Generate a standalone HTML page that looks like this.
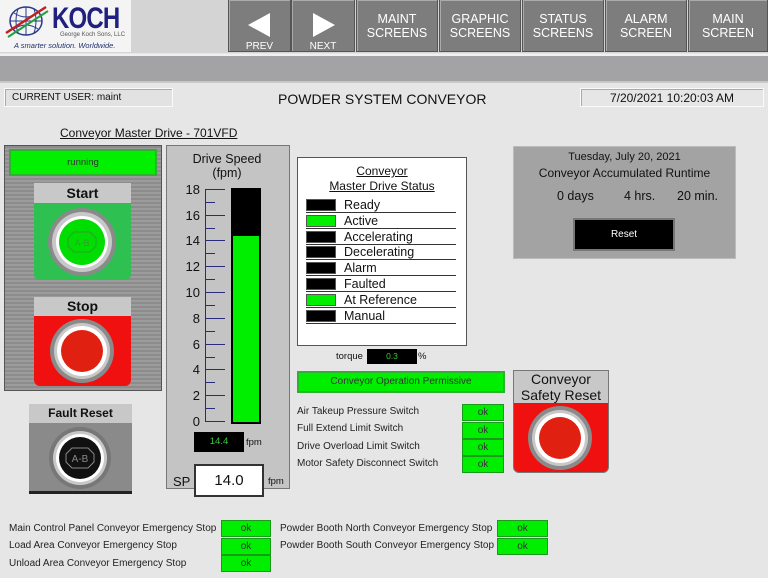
<!DOCTYPE html>
<html><head><style>
*{margin:0;padding:0;box-sizing:border-box}
body{width:768px;height:578px;background:#e6e6e6;font-family:"Liberation Sans",Arial,sans-serif;position:relative;overflow:hidden;color:#111}
.a{position:absolute}
.nav{position:absolute;top:0;height:52px;background:#7d7d7d;border:1px solid #555;border-top:none;color:#fff;font-size:12.5px;text-align:center;line-height:14px;padding-top:12px;box-shadow:inset 1px 1px 0 #aaa}
.ok{position:absolute;background:#00ee00;border:1px solid #1a9a1a;font-size:10px;color:#333;text-align:center;line-height:15px;height:17px}
.lbl{position:absolute;font-size:10px;color:#222;white-space:nowrap}
.row{position:absolute;left:306px;width:150px;height:15px;border-bottom:1px solid #333;font-size:12.5px}
.row i{position:absolute;left:0;top:1px;width:30px;height:12px;background:#000;border:1px solid #555}
.row span{position:absolute;left:38px;top:0}
.tk{position:absolute;left:205px;height:1px;background:#2a2a7a}
.num{position:absolute;left:180px;width:20px;text-align:right;font-size:13px}
</style></head><body>
<div class="a" style="left:0;top:0;width:768px;height:53px;background:#d4d4d4"></div>
<div class="a" style="left:0;top:0;width:131px;height:52px;background:#f4f4f4"></div>
<svg class="a" style="left:4px;top:3px" width="46" height="36"><ellipse cx="22" cy="18" rx="16" ry="14" fill="none" stroke="#2a3a8a" stroke-width="1.5"/><path d="M6 18h32M22 4v28M10 10q12 8 24 0M10 26q12-8 24 0M14 6q-4 12 0 24M30 6q4 12 0 24" fill="none" stroke="#2a3a8a"/><path d="M2 30L42 4" stroke="#c02020" stroke-width="2.5"/><path d="M4 34L44 8" stroke="#20a040" stroke-width="2"/></svg>
<div class="a" style="left:52px;top:2px;font-size:30px;font-weight:bold;color:#202080;letter-spacing:-1px;transform:scaleX(0.8);transform-origin:left">KOCH</div>
<div class="a" style="left:60px;top:32px;font-size:6px;color:#555">George Koch Sons, LLC</div>
<div class="a" style="left:14px;top:41px;font-size:7.5px;color:#203070;font-style:italic">A smarter solution. Worldwide.</div>
<div class="nav" style="left:228px;width:63px;padding-top:40px;font-size:10px">PREV</div>
<svg class="a" style="left:246px;top:12px" width="26" height="26"><path d="M24 1L2 13L24 25Z" fill="#fff"/></svg>
<div class="nav" style="left:291px;width:64px;padding-top:40px;font-size:10px">NEXT</div>
<svg class="a" style="left:311px;top:12px" width="26" height="26"><path d="M2 1L24 13L2 25Z" fill="#fff"/></svg>
<div class="nav" style="left:356px;width:82px">MAINT<br>SCREENS</div>
<div class="nav" style="left:439px;width:82px">GRAPHIC<br>SCREENS</div>
<div class="nav" style="left:522px;width:82px">STATUS<br>SCREENS</div>
<div class="nav" style="left:605px;width:82px">ALARM<br>SCREEN</div>
<div class="nav" style="left:688px;width:80px">MAIN<br>SCREEN</div>
<div class="a" style="left:0;top:54px;width:768px;height:29px;background:#a3a3a6;border-top:2px solid #f0f0f0;border-bottom:2px solid #c8c8c8"></div>
<div class="a" style="left:4px;top:88px;width:169px;height:19px;background:#e2e2e2;border:1px solid #fafafa;box-shadow:inset 1px 1px 0 #aaa;font-size:10px;line-height:18px;padding-left:7px">CURRENT USER: maint</div>
<div class="a" style="left:278px;top:91px;font-size:14px">POWDER SYSTEM CONVEYOR</div>
<div class="a" style="left:580px;top:88px;width:184px;height:19px;border:1px solid #fafafa;box-shadow:inset 1px 1px 0 #aaa;font-size:12px;line-height:18px;text-align:center">7/20/2021 10:20:03 AM</div>
<div class="a" style="left:60px;top:126px;font-size:12px;text-decoration:underline">Conveyor Master Drive - 701VFD</div>

<div class="a" style="left:4px;top:145px;width:158px;height:246px;border:1px solid #555;background:repeating-linear-gradient(#8c8c8c 0 2px,#9c9c9c 2px 4px)"></div>
<div class="a" style="left:9px;top:149px;width:148px;height:27px;background:#00f000;border:2px solid #30b030;font-size:9.5px;text-align:center;line-height:23px;color:#333">running</div>
<div class="a" style="left:34px;top:183px;width:97px;height:20px;background:#c8c8c8;font-size:14px;font-weight:bold;text-align:center;line-height:20px">Start</div>
<div class="a" style="left:34px;top:203px;width:97px;height:77px;background:#2ec050;border-radius:0 0 6px 6px"></div>
<svg class="a" style="left:47px;top:207px" width="70" height="70"><circle cx="35" cy="35" r="34" fill="#8a8a8a"/><circle cx="35" cy="35" r="30" fill="#c8c8c8"/><circle cx="35" cy="35" r="26" fill="#fff"/><circle cx="35" cy="35" r="23" fill="#00dd00"/><path d="M27 25h16l6 6v8l-6 6h-16l-6-6v-8z" fill="none" stroke="#30a030"/><text x="35" y="39" font-size="9" text-anchor="middle" fill="#30a030" font-family="Liberation Sans">A-B</text></svg>
<div class="a" style="left:34px;top:297px;width:97px;height:19px;background:#c8c8c8;font-size:14px;font-weight:bold;text-align:center;line-height:19px">Stop</div>
<div class="a" style="left:34px;top:316px;width:97px;height:70px;background:#f01010;border-radius:0 0 6px 6px"></div>
<svg class="a" style="left:49px;top:318px" width="66" height="66"><circle cx="33" cy="33" r="32" fill="#8a8a8a"/><circle cx="33" cy="33" r="28" fill="#c8c8c8"/><circle cx="33" cy="33" r="25" fill="#fff"/><circle cx="33" cy="33" r="21" fill="#e02010"/></svg>

<div class="a" style="left:29px;top:404px;width:103px;height:90px;background:#8a8a8a;border-bottom:3px solid #222"></div>
<div class="a" style="left:29px;top:404px;width:103px;height:19px;background:#c8c8c8;font-size:12px;font-weight:bold;text-align:center;line-height:19px">Fault Reset</div>
<svg class="a" style="left:45px;top:426px" width="70" height="64"><circle cx="35" cy="32" r="31" fill="#777"/><circle cx="35" cy="32" r="27" fill="#c8c8c8"/><circle cx="35" cy="32" r="24" fill="#fff"/><circle cx="35" cy="32" r="21" fill="#111"/><path d="M27 22h16l6 6v8l-6 6h-16l-6-6v-8z" fill="none" stroke="#888"/><text x="35" y="36" font-size="10" text-anchor="middle" fill="#888" font-family="Liberation Sans">A-B</text></svg>

<div class="a" style="left:166px;top:145px;width:124px;height:344px;background:#c4c4c4;border:1px solid #777"></div>
<div class="a" style="left:166px;top:152px;width:122px;text-align:center;font-size:12.5px;line-height:14px">Drive Speed<br>(fpm)</div>
<div class="a" style="left:205px;top:189px;width:1px;height:232px;background:#2a2a7a"></div>
<div class="tk" style="top:189px;width:20px"></div><div class="tk" style="top:202px;width:10px"></div>
<div class="tk" style="top:215px;width:20px"></div><div class="tk" style="top:228px;width:10px"></div>
<div class="tk" style="top:240px;width:20px"></div><div class="tk" style="top:253px;width:10px"></div>
<div class="tk" style="top:266px;width:20px"></div><div class="tk" style="top:279px;width:10px"></div>
<div class="tk" style="top:292px;width:20px"></div><div class="tk" style="top:305px;width:10px"></div>
<div class="tk" style="top:318px;width:20px"></div><div class="tk" style="top:331px;width:10px"></div>
<div class="tk" style="top:344px;width:20px"></div><div class="tk" style="top:357px;width:10px"></div>
<div class="tk" style="top:369px;width:20px"></div><div class="tk" style="top:382px;width:10px"></div>
<div class="tk" style="top:395px;width:20px"></div><div class="tk" style="top:408px;width:10px"></div>
<div class="tk" style="top:421px;width:20px"></div>
<div class="num" style="top:182px">18</div><div class="num" style="top:208px">16</div><div class="num" style="top:233px">14</div><div class="num" style="top:259px">12</div><div class="num" style="top:285px">10</div><div class="num" style="top:311px">8</div><div class="num" style="top:337px">6</div><div class="num" style="top:362px">4</div><div class="num" style="top:388px">2</div><div class="num" style="top:414px">0</div>
<div class="a" style="left:231px;top:188px;width:30px;height:236px;background:#000"></div>
<div class="a" style="left:233px;top:236px;width:26px;height:186px;background:#00ee00"></div>
<div class="a" style="left:194px;top:432px;width:50px;height:20px;background:#000;color:#3c3;font-size:9.5px;text-align:center;line-height:20px">14.4</div>
<div class="a" style="left:246px;top:437px;font-size:9.5px">fpm</div>
<div class="a" style="left:173px;top:474px;font-size:13px">SP</div>
<div class="a" style="left:194px;top:464px;width:70px;height:33px;background:#fff;border:2px solid #333;font-size:15px;text-align:center;line-height:29px">14.0</div>
<div class="a" style="left:268px;top:476px;font-size:9.5px">fpm</div>

<div class="a" style="left:297px;top:157px;width:170px;height:189px;background:#fff;border:1px solid #555"></div>
<div class="a" style="left:297px;top:164px;width:170px;text-align:center;font-size:12px;line-height:15px;text-decoration:underline">Conveyor<br>Master Drive Status</div>
<div class="row" style="top:198px"><i></i><span>Ready</span></div>
<div class="row" style="top:214px"><i style="background:#00ee00"></i><span>Active</span></div>
<div class="row" style="top:230px"><i></i><span>Accelerating</span></div>
<div class="row" style="top:245px"><i></i><span>Decelerating</span></div>
<div class="row" style="top:261px"><i></i><span>Alarm</span></div>
<div class="row" style="top:277px"><i></i><span>Faulted</span></div>
<div class="row" style="top:293px"><i style="background:#00ee00"></i><span>At Reference</span></div>
<div class="row" style="top:309px"><i></i><span>Manual</span></div>
<div class="a" style="left:336px;top:351px;font-size:9.5px">torque</div>
<div class="a" style="left:367px;top:349px;width:50px;height:15px;background:#000;color:#3c3;font-size:8.5px;text-align:center;line-height:15px">0.3</div>
<div class="a" style="left:418px;top:351px;font-size:9.5px">%</div>
<div class="a" style="left:297px;top:371px;width:208px;height:22px;background:#00ee00;border:2px solid #30b030;font-size:10px;text-align:center;line-height:18px;color:#333">Conveyor Operation Permissive</div>

<div class="lbl" style="left:297px;top:406px">Air Takeup Pressure Switch</div><div class="ok" style="left:462px;top:404px;width:42px">ok</div>
<div class="lbl" style="left:297px;top:423px">Full Extend Limit Switch</div><div class="ok" style="left:462px;top:422px;width:42px">ok</div>
<div class="lbl" style="left:297px;top:441px">Drive Overload Limit Switch</div><div class="ok" style="left:462px;top:439px;width:42px">ok</div>
<div class="lbl" style="left:297px;top:458px">Motor Safety Disconnect Switch</div><div class="ok" style="left:462px;top:456px;width:42px">ok</div>

<div class="a" style="left:513px;top:370px;width:96px;height:103px;background:#f01010;border:1px solid #777;border-radius:0 0 6px 6px"></div>
<div class="a" style="left:514px;top:371px;width:94px;height:32px;background:#c8c8c8;font-size:14px;text-align:center;line-height:16px">Conveyor<br>Safety Reset</div>
<svg class="a" style="left:527px;top:405px" width="66" height="66"><circle cx="33" cy="33" r="32" fill="#8a8a8a"/><circle cx="33" cy="33" r="28" fill="#c8c8c8"/><circle cx="33" cy="33" r="25" fill="#fff"/><circle cx="33" cy="33" r="21" fill="#e02010"/></svg>

<div class="a" style="left:513px;top:146px;width:223px;height:113px;background:#a3a3a3;border:1px solid #bbb"></div>
<div class="a" style="left:513px;top:151px;width:223px;text-align:center;font-size:11px">Tuesday, July 20, 2021</div>
<div class="a" style="left:513px;top:166px;width:223px;text-align:center;font-size:12px">Conveyor Accumulated Runtime</div>
<div class="a" style="left:557px;top:189px;font-size:12.5px">0 days</div>
<div class="a" style="left:624px;top:189px;font-size:12.5px">4 hrs.</div>
<div class="a" style="left:677px;top:189px;font-size:12.5px">20 min.</div>
<div class="a" style="left:573px;top:218px;width:102px;height:33px;background:#000;border:2px solid #777;color:#fff;font-size:10px;text-align:center;line-height:29px">Reset</div>

<div class="lbl" style="left:9px;top:523px">Main Control Panel Conveyor Emergency Stop</div><div class="ok" style="left:221px;top:520px;width:50px">ok</div>
<div class="lbl" style="left:9px;top:540px">Load Area Conveyor Emergency Stop</div><div class="ok" style="left:221px;top:538px;width:50px">ok</div>
<div class="lbl" style="left:9px;top:558px">Unload Area Conveyor Emergency Stop</div><div class="ok" style="left:221px;top:555px;width:50px">ok</div>
<div class="lbl" style="left:280px;top:523px">Powder Booth North Conveyor Emergency Stop</div><div class="ok" style="left:497px;top:520px;width:51px">ok</div>
<div class="lbl" style="left:280px;top:540px">Powder Booth South Conveyor Emergency Stop</div><div class="ok" style="left:497px;top:538px;width:51px">ok</div>
</body></html>
